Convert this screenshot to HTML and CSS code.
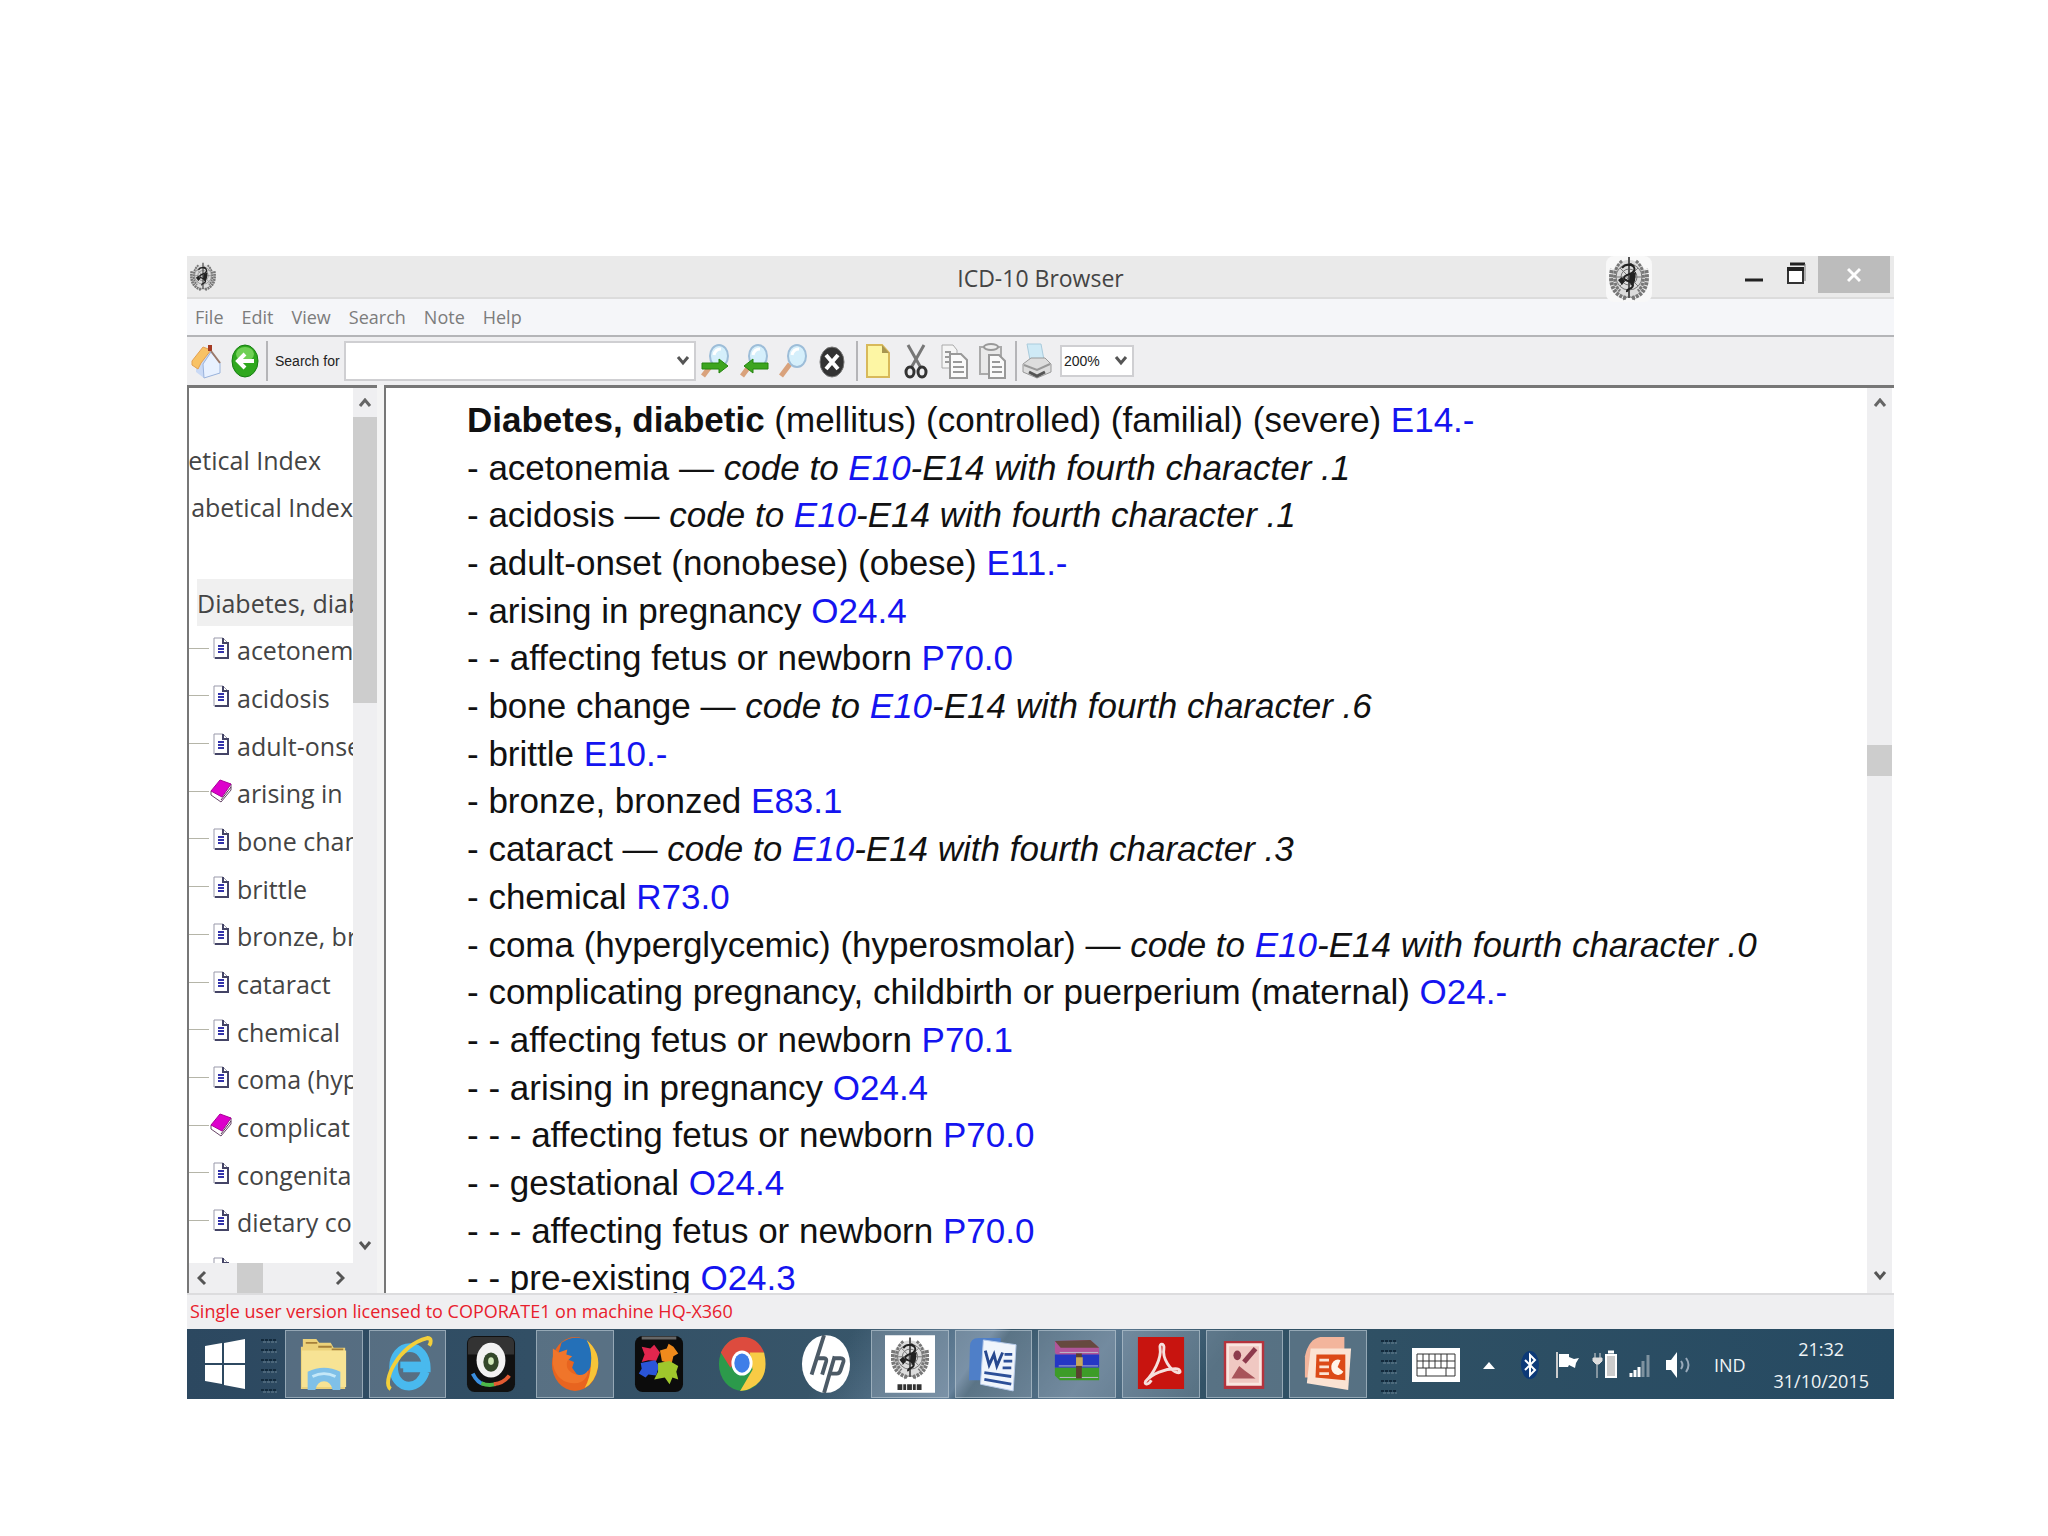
FILE: index.html
```html
<!DOCTYPE html>
<html lang="en">
<head>
    <meta charset="UTF-8">
    <meta name="viewport" content="width=device-width, initial-scale=1.0">
    <title>ICD-10 Browser</title>
    <link rel="stylesheet" href="styles.css">
</head>
<body>
    <!-- shared icons -->
    <svg class="defs" aria-hidden="true">
        <symbol id="emblem" viewBox="0 0 40 46">
            <ellipse cx="20" cy="23" rx="18" ry="19" fill="#dcdcdc"/>
            <g fill="none" stroke="#777">
                <path d="M17 42C4 39 0 27 3 13M23 42c13-3 17-15 14-29" stroke-width="4" stroke-dasharray="3 1"/>
                <path d="M13 5C4 12 3 28 11 35M27 5c9 7 10 23 2 30" stroke-width="3" stroke-dasharray="3 1"/>
                <circle cx="20" cy="21" r="13"/>
                <circle cx="20" cy="21" r="8"/>
                <path d="M7 21h26M11 12l18 18M29 12L11 30M14 44l6-4 6 4"/>
            </g>
            <path d="M20 1v41" stroke="#555" stroke-width="2"/>
            <path d="M13 12c4-6 15-3 12 3-2 4-10 3-10 7s9 2 9 7-7 3-6 7" fill="none" stroke="#222" stroke-width="2"/>
            <path d="M9 24l4-3 3 4-3 4zM21 18l6-2-1 9-3 5-3-4zM17 9l5-2 4 3z" fill="#222"/>
        </symbol>
        <symbol id="doc" viewBox="0 0 16 22">
            <path d="M1 1h9l5 5v15H1z" fill="#fff" stroke="#99a"/>
            <path d="M10 1v5h5v15H2" fill="none" stroke="#446" stroke-width="2"/>
            <path d="M5 9h6M5 12h6M5 15h6" stroke="#33a" stroke-width="2"/>
        </symbol>
        <symbol id="book" viewBox="0 0 22 24">
            <path d="M1 12v4l10 7 10-12V5z" fill="#fff" stroke="#646"/>
            <path d="M1 12L10 1l11 4-9 13z" fill="#d0c" stroke="#a09"/>
            <path d="M11 21L21 8" stroke="#535"/>
        </symbol>
        <symbol id="down" viewBox="0 0 14 10"><path d="M2 1l5 6 5-6" fill="none" stroke="#555" stroke-width="3"/></symbol>
        <symbol id="up" viewBox="0 0 14 10"><path d="M2 8l5-6 5 6" fill="none" stroke="#666" stroke-width="3"/></symbol>
        <symbol id="lens" viewBox="0 0 30 36">
            <path d="M3 33l9-12" stroke="#d9a27c" stroke-width="5"/>
            <ellipse cx="19" cy="13" rx="9" ry="11" fill="#d5effb" stroke="#9dbdd8" stroke-width="2"/>
            <path d="M14 12c1-5 4-6 7-6" fill="none" stroke="#fff" stroke-width="3"/>
        </symbol>
        <symbol id="grip" viewBox="0 0 18 60">
            <path d="M1 6h16M1 16h16M1 26h16M1 36h16M1 46h16M1 56h16" stroke="#132a3c" stroke-width="2" stroke-dasharray="3 1"/>
            <path d="M3 8h14M3 18h14M3 28h14M3 38h14M3 48h14M3 58h14" stroke="#6d8494" stroke-dasharray="3 1"/>
        </symbol>
    </svg>

    <div class="window">
        <header class="titlebar">
            <svg class="app-icon"><use href="#emblem"/></svg>
            <h1>ICD-10 Browser</h1>
            <span class="badge"><svg><use href="#emblem"/></svg></span>
            <div class="controls">
                <button aria-label="Minimize"><svg viewBox="0 0 20 30"><path d="M1 20h18" stroke="#222" stroke-width="3"/></svg></button>
                <button aria-label="Restore"><svg viewBox="0 0 20 30"><path d="M4 4h15" stroke="#222" stroke-width="3"/><path d="M19 4v17" stroke="#777"/><path d="M2 10v13h15V10" fill="#fff" stroke="#333" stroke-width="2"/><path d="M1 9h17" stroke="#222" stroke-width="4"/></svg></button>
                <button class="close" aria-label="Close"><svg viewBox="0 0 14 16"><path d="M1 2l12 12M13 2L1 14" stroke="#fff" stroke-width="3"/></svg></button>
            </div>
        </header>

        <nav class="menubar">
            <button>File</button>
            <button>Edit</button>
            <button>View</button>
            <button>Search</button>
            <button>Note</button>
            <button>Help</button>
        </nav>

        <div class="toolbar">
            <button aria-label="Home"><svg viewBox="0 0 30 36"><path d="M5 19L19 7l9 12v11l-15 5-8-6z" fill="#c9d9f5"/><path d="M12 21l8-12 9 11v10l-16 5z" fill="#e8f1ff" stroke="#9ab3dc"/><path d="M1 18L12 4l8 3-10 13-3 6-6-4z" fill="#f8c265" stroke="#e3a050"/><path d="M19 2v6" stroke="#a53a22" stroke-width="4"/><path d="M20 8l9 12" stroke="#9b7a6b" stroke-width="2"/></svg></button>
            <button class="back" aria-label="Back"><svg viewBox="0 0 30 36"><ellipse cx="15" cy="18" rx="13" ry="16" fill="#2fa81e" stroke="#167d12"/><ellipse cx="15" cy="11" rx="9" ry="7" fill="#6fd055"/><path d="M24 18H9M15 11l-7 7 7 7" fill="none" stroke="#fff" stroke-width="4"/></svg></button>
            <span class="sep"></span>
            <label for="search">Search for</label>
            <span class="combo combo-search">
                <select id="search"><option></option></select>
                <svg><use href="#down"/></svg>
            </span>
            <button aria-label="Find next"><svg viewBox="0 0 30 36"><use href="#lens"/><path d="M2 20h17v-4l9 7-9 7v-4H2z" fill="#3da51f" stroke="#24850f"/></svg></button>
            <button aria-label="Find previous"><svg viewBox="0 0 30 36"><use href="#lens"/><path d="M29 20H14v-4l-9 7 9 7v-4h15z" fill="#3da51f" stroke="#24850f"/></svg></button>
            <button aria-label="Find"><svg viewBox="0 0 30 36"><use href="#lens"/></svg></button>
            <button aria-label="Stop"><svg viewBox="0 0 30 36"><ellipse cx="15" cy="19" rx="12" ry="15" fill="#333" stroke="#777"/><path d="M9 12l12 14M21 12L9 26" stroke="#fff" stroke-width="4"/></svg></button>
            <span class="sep"></span>
            <button aria-label="New note"><svg viewBox="0 0 30 36"><path d="M4 2h15l7 8v24H4z" fill="#fdf6a4" stroke="#d8b95a" stroke-width="2"/><path d="M19 2v8h7z" fill="#a89650"/></svg></button>
            <button aria-label="Cut"><svg viewBox="0 0 30 36"><path d="M7 2l13 23M23 2L10 25" stroke="#777" stroke-width="3"/><ellipse cx="9" cy="29" rx="4" ry="5" fill="none" stroke="#333" stroke-width="3"/><ellipse cx="21" cy="29" rx="4" ry="5" fill="none" stroke="#333" stroke-width="3"/></svg></button>
            <button aria-label="Copy"><svg viewBox="0 0 30 36"><path d="M3 2h11l4 5v18H3z" fill="#f5f5f5" stroke="#aaa"/><path d="M6 9h6M6 14h6M6 19h6" stroke="#999" stroke-width="2"/><path d="M11 11h11l6 6v18H11z" fill="#fafafa" stroke="#999" stroke-width="2"/><path d="M14 19h9M14 24h11M14 29h11" stroke="#999" stroke-width="2"/></svg></button>
            <button aria-label="Paste"><svg viewBox="0 0 30 36"><path d="M3 4h21v27H3z" fill="#e9e9e9" stroke="#aaa" stroke-width="2"/><ellipse cx="14" cy="4" rx="7" ry="3" fill="#eee" stroke="#999" stroke-width="2"/><path d="M12 12h10l6 6v17H12z" fill="#fafafa" stroke="#999" stroke-width="2"/><path d="M15 19h8M15 24h10M15 29h10" stroke="#999" stroke-width="2"/></svg></button>
            <span class="sep"></span>
            <button aria-label="Print"><svg viewBox="0 0 30 36"><path d="M5 1h14l3 16H8z" fill="#cfeaf6" stroke="#aacbdc"/><path d="M1 21l8-6h14l6 6v8l-14 6-14-6z" fill="#ddd" stroke="#999"/><path d="M2 22l13 5 13-6" fill="none" stroke="#999" stroke-width="2"/><path d="M7 29l8 4 8-4" stroke="#555" stroke-width="3" fill="none"/></svg></button>
            <span class="combo combo-zoom">
                <select aria-label="Zoom"><option>200%</option></select>
                <svg><use href="#down"/></svg>
            </span>
        </div>

        <main class="panes">
            <aside class="sidebar">
                <ul class="tree">
                    <li></li>
                    <li class="top"><span>etical Index</span></li>
                    <li class="top"><span>abetical Index</span></li>
                    <li></li>
                    <li class="selected"><span>Diabetes, diabetic</span></li>
                    <li class="leaf"><svg><use href="#doc"/></svg><span>acetonemia</span></li>
                    <li class="leaf"><svg><use href="#doc"/></svg><span>acidosis</span></li>
                    <li class="leaf"><svg><use href="#doc"/></svg><span>adult-onset</span></li>
                    <li class="leaf"><svg class="book"><use href="#book"/></svg><span>arising in</span></li>
                    <li class="leaf"><svg><use href="#doc"/></svg><span>bone change</span></li>
                    <li class="leaf"><svg><use href="#doc"/></svg><span>brittle</span></li>
                    <li class="leaf"><svg><use href="#doc"/></svg><span>bronze, bronzed</span></li>
                    <li class="leaf"><svg><use href="#doc"/></svg><span>cataract</span></li>
                    <li class="leaf"><svg><use href="#doc"/></svg><span>chemical</span></li>
                    <li class="leaf"><svg><use href="#doc"/></svg><span>coma (hyperglycemic)</span></li>
                    <li class="leaf"><svg class="book"><use href="#book"/></svg><span>complicat</span></li>
                    <li class="leaf"><svg><use href="#doc"/></svg><span>congenita</span></li>
                    <li class="leaf"><svg><use href="#doc"/></svg><span>dietary co</span></li>
                    <li class="leaf last"><svg><use href="#doc"/></svg></li>
                </ul>
                <div class="vscroll">
                    <svg><use href="#up"/></svg>
                    <div class="thumb"></div>
                    <svg class="end"><use href="#down"/></svg>
                </div>
                <div class="hscroll">
                    <svg viewBox="0 0 10 16"><path d="M8 2L2 8l6 6" fill="none" stroke="#555" stroke-width="3"/></svg>
                    <div class="thumb"></div>
                    <svg viewBox="0 0 10 16"><path d="M2 2l6 6-6 6" fill="none" stroke="#555" stroke-width="3"/></svg>
                </div>
            </aside>

            <section class="content">
                <div class="entries">
                    <p><b>Diabetes, diabetic</b> (mellitus) (controlled) (familial) (severe) <a href="#">E14.-</a></p>
                    <p>- acetonemia — <i>code to <a href="#">E10</a>-E14 with fourth character .1</i></p>
                    <p>- acidosis — <i>code to <a href="#">E10</a>-E14 with fourth character .1</i></p>
                    <p>- adult-onset (nonobese) (obese) <a href="#">E11.-</a></p>
                    <p>- arising in pregnancy <a href="#">O24.4</a></p>
                    <p>- - affecting fetus or newborn <a href="#">P70.0</a></p>
                    <p>- bone change — <i>code to <a href="#">E10</a>-E14 with fourth character .6</i></p>
                    <p>- brittle <a href="#">E10.-</a></p>
                    <p>- bronze, bronzed <a href="#">E83.1</a></p>
                    <p>- cataract — <i>code to <a href="#">E10</a>-E14 with fourth character .3</i></p>
                    <p>- chemical <a href="#">R73.0</a></p>
                    <p>- coma (hyperglycemic) (hyperosmolar) — <i>code to <a href="#">E10</a>-E14 with fourth character .0</i></p>
                    <p>- complicating pregnancy, childbirth or puerperium (maternal) <a href="#">O24.-</a></p>
                    <p>- - affecting fetus or newborn <a href="#">P70.1</a></p>
                    <p>- - arising in pregnancy <a href="#">O24.4</a></p>
                    <p>- - - affecting fetus or newborn <a href="#">P70.0</a></p>
                    <p>- - gestational <a href="#">O24.4</a></p>
                    <p>- - - affecting fetus or newborn <a href="#">P70.0</a></p>
                    <p>- - pre-existing <a href="#">O24.3</a></p>
                </div>
                <div class="vscroll">
                    <svg><use href="#up"/></svg>
                    <div class="thumb"></div>
                    <svg class="end"><use href="#down"/></svg>
                </div>
            </section>
        </main>

        <div class="status">Single user version licensed to COPORATE1 on machine HQ-X360</div>

        <footer class="taskbar">
            <div class="start">
                <button aria-label="Start"><svg viewBox="0 0 42 50"><path d="M1 7l17-3v20H1zM20 4l21-4v24H20zM1 26h17v19L1 42zM20 26h21v24l-21-4z" fill="#fff"/></svg></button>
                <svg class="grip"><use href="#grip"/></svg>
            </div>
            <div class="apps">
                <button class="open" aria-label="File Explorer"><svg viewBox="0 0 52 60"><path d="M4 4h14l3 4h12l3 5h12v43H2V12h2z" fill="#ecd27a"/><path d="M7 8h12M20 12h14M34 15h12" stroke="#a4803a" stroke-width="2"/><path d="M3 16h46v38H3z" fill="#f7e394"/><path d="M9 38q17-8 34 0v19h-8q-2-9-9-9t-9 9H9z" fill="#7fc0e8"/><path d="M14 43q12-6 24 0" stroke="#c5e8f8" stroke-width="3" fill="none"/></svg></button>
                <button class="open" aria-label="Internet Explorer"><svg viewBox="0 0 52 60"><path d="M44 38c-3 9-9 15-17 15-10 0-16-9-16-20s7-20 17-20 17 9 17 21H21" fill="none" stroke="#49b9ee" stroke-width="9"/><path d="M18 31h26" stroke="#49b9ee" stroke-width="7"/><path d="M8 56C-2 50 16 10 46 3c5 0 4 5 2 8" fill="none" stroke="#f3cf3a" stroke-width="4"/></svg></button>
                <button aria-label="Camera"><svg viewBox="0 0 52 60"><rect x="1" y="1" width="50" height="58" rx="8" fill="#111"/><path d="M2 20V9q0-7 7-7h34q7 0 7 7v11z" fill="#333"/><ellipse cx="26" cy="26" rx="15" ry="18" fill="#f2f2f2"/><ellipse cx="26" cy="28" rx="8" ry="10" fill="#33472a"/><ellipse cx="26" cy="27" rx="3" ry="4" fill="#cfe7b8"/><path d="M7 40q5 10 12 11" fill="none" stroke="#3a8fe0" stroke-width="4"/><path d="M16 50q7 3 15 1" fill="none" stroke="#4cb749" stroke-width="4"/><path d="M29 51q10-1 16-9" fill="none" stroke="#e35b32" stroke-width="4"/></svg></button>
                <button class="open" aria-label="Firefox"><svg viewBox="0 0 52 60"><ellipse cx="26" cy="30" rx="24" ry="28" fill="#e8641f"/><path d="M38 5q14 12 12 28-3 16-14 22 12-22 2-50z" fill="#f7c438"/><path d="M12 8q12-9 26-3 7 12 4 28-5 12-14 8l-5-7 2-6-7-3-5 3-5-6z" fill="#2470b8"/><path d="M3 14l6 4 9-3-1 5 6 2-5 5q-3 10 9 14 9 2 13-5-2 14-14 14Q7 50 3 30z" fill="#f0752a"/></svg></button>
                <button aria-label="Puzzle"><svg viewBox="0 0 52 60"><rect x="1" y="1" width="50" height="58" rx="8" fill="#0c0c0c"/><path d="M8 3h36" stroke="#666" stroke-width="3"/><path d="M8 12l9 2 4-4 6 8-4 9-8-1-7 2 3-8z" fill="#e0264e"/><path d="M27 16l7-2 2-5 5 3 5 7-5 3-2 8-10-3z" fill="#ef8a1c"/><path d="M7 29l15-3 4 6-3 10-8-1-3 3-7-4 3-5z" fill="#2a55d8"/><path d="M25 29l12-2 9 5-2 6 2 8-6-2-3 7-5-7-11 2 4-8z" fill="#9fc72c"/></svg></button>
                <button aria-label="Chrome"><svg viewBox="0 0 52 60"><ellipse cx="26" cy="30" rx="24" ry="28" fill="#2c9a4b"/><path d="M4 18Q12 2 27 2t22 16L26 20 14 34z" fill="#dd4b3e"/><path d="M49 18q6 26-12 36-6 4-13 4l13-22-3-18z" fill="#f8cb45"/><ellipse cx="26" cy="29" rx="11" ry="13" fill="#fff"/><ellipse cx="26" cy="29" rx="8" ry="10" fill="#3f7ee8"/></svg></button>
                <button aria-label="HP"><svg viewBox="0 0 52 60"><ellipse cx="26" cy="30" rx="25" ry="30" fill="#fff"/><path d="M24 0L11 41M16 24h8q3 0 2 4l-4 13M35 22L24 60M34 24h7q4 0 3 4l-3 9q-1 3-4 3h-6" fill="none" stroke="#4c5a66" stroke-width="4"/></svg></button>
                <button class="open" aria-label="ICD-10"><svg viewBox="0 0 52 60"><path d="M0 0h52v60H0z" fill="#fff"/><use href="#emblem" x="6" y="1" width="40" height="47"/><path d="M13 54h26" stroke="#333" stroke-width="6" stroke-dasharray="5 1 3 1"/></svg></button>
                <button class="open" aria-label="Word"><svg viewBox="0 0 52 60"><path d="M2 12q0-9 9-9h23v44H1z" fill="#4f7fc8"/><path d="M16 5l34 5-3 48-34-7z" fill="#f0f5fc" stroke="#b7cbea"/><path d="M18 16l4 15 5-11 3 12 6-14" fill="none" stroke="#27488f" stroke-width="3"/><path d="M38 20h8M37 27h9M36 34h9M17 39l28 4M17 46l28 5" stroke="#2c4f98" stroke-width="3"/></svg></button>
                <button class="open" aria-label="WinRAR"><svg viewBox="0 0 52 60"><path d="M3 6l37-1 9 8v10H7l-4-5z" fill="#b0559a"/><path d="M3 6l37-1 9 8H9z" fill="#66493f"/><path d="M3 20h46v14H3z" fill="#2537c4"/><path d="M3 34h46v13H8l-5-5z" fill="#3d9c28"/><path d="M8 18h40M7 32h41M8 44h40" stroke="#b9b9c9" stroke-width="1"/><path d="M28 19v26" stroke="#5a4030" stroke-width="6"/><path d="M25 23h7v9h-7z" fill="#c8a95c"/></svg></button>
                <button class="open" aria-label="Adobe Reader"><svg viewBox="0 0 52 60"><path d="M2 2h48v54H2z" fill="#c8140f"/><path d="M10 48C18 40 27 24 25 13c-1-5 5-5 4 1-2 10 7 23 14 25 5 1 3-4-2-4-11 0-24 5-31 13-2 4 3 4 6-1" fill="none" stroke="#f6e0dc" stroke-width="3"/></svg></button>
                <button class="open" aria-label="K"><svg viewBox="0 0 52 60"><path d="M5 6h42v50H5z" fill="#b5333d"/><path d="M9 10h34v41H9z" fill="#f0c8c2" stroke="#fae6e0" stroke-width="3"/><ellipse cx="19" cy="21" rx="4" ry="5" fill="#8d3a4c"/><path d="M38 14L26 28" stroke="#8d3a4c" stroke-width="5"/><path d="M13 45l8-13 6 5 11 8z" fill="#a8545a"/></svg></button>
                <button class="open" aria-label="PowerPoint"><svg viewBox="0 0 52 60"><path d="M2 22Q6 4 18 2h25v42H2z" fill="#f3b59c"/><path d="M8 14h42l-3 43L4 50z" fill="#fbe3d3"/><path d="M14 20h30v27l-31-3z" fill="#dc4a17"/><path d="M17 26h10M17 33h10M17 40h10" stroke="#fbe3d3" stroke-width="3"/><path d="M39 26a7 8 0 1 0 3 12l-6-5z" fill="#fff3e8"/></svg></button>
            </div>
            <div class="tray">
                <svg class="grip"><use href="#grip"/></svg>
                <svg class="keyboard" viewBox="0 0 48 34"><path d="M0 0h48v34H0z" fill="#fff"/><path d="M5 6h38v22H5zM5 13h38M5 20h38M11 6v14M17 6v14M23 6v14M29 6v14M35 6v14M14 20v8M34 20v8" fill="none" stroke="#333"/></svg>
                <svg class="more" viewBox="0 0 14 10"><path d="M1 9l6-7 6 7z" fill="#fff"/></svg>
                <svg class="bluetooth" viewBox="0 0 18 30"><ellipse cx="9" cy="15" rx="9" ry="14" fill="#0d3a78"/><path d="M4 10l10 10-5 5V5l5 5L4 20" fill="none" stroke="#fff" stroke-width="2"/></svg>
                <svg class="flag" viewBox="0 0 26 30"><path d="M2 2v26" stroke="#ccc" stroke-width="2"/><path d="M4 4h10v3l5 2 5-1-3 5-1 5-6-3-1 2H4z" fill="#fff"/></svg>
                <svg class="battery" viewBox="0 0 26 30"><path d="M3 3v5M8 3v5M1 8h9v3l-3 3H4l-3-3zM5 14v14" stroke="#ddd" stroke-width="1" fill="#ddd"/><path d="M14 5h10v22H14z" fill="#ccc" stroke="#fff" stroke-width="2"/><path d="M16 2h6" stroke="#fff" stroke-width="3"/></svg>
                <svg class="signal" viewBox="0 0 22 24"><path d="M2 24v-4M6 24v-7M10 24V14" stroke="#fff" stroke-width="3"/><path d="M14 24V8M19 24V2" stroke="#7e929f" stroke-width="3"/></svg>
                <svg class="sound" viewBox="0 0 28 30"><path d="M1 10h5l6-8v26l-6-8H1z" fill="#fff"/><path d="M16 11q3 4 0 8M21 8q5 7 0 14" fill="none" stroke="#9ab" stroke-width="2"/></svg>
                <span class="lang">IND</span>
                <div class="clock">
                    <time>21:32</time>
                    <time>31/10/2015</time>
                </div>
            </div>
        </footer>
    </div>
</body>
</html>
```
FILE: styles.css
```css
* {
    box-sizing: border-box;
}
body {
    margin: 0;
    padding: 256px 154px 137px 187px;
    height: 100vh;
    background-color: #fff;
    font-family: "Open Sans", "Noto Sans", sans-serif;
    color: #333;
}
button {
    padding: 0;
    border: none;
    background: none;
    font: inherit;
    color: inherit;
}
svg {
    display: block;
    flex: none;
}
.defs {
    position: absolute;
    width: 0;
    height: 0;
}
.window {
    display: flex;
    flex-direction: column;
    height: 100%;
}

/* title bar */
.titlebar {
    position: relative;
    display: flex;
    align-items: center;
    justify-content: center;
    height: 43px;
    background-color: #eaeaea;
    border-bottom: 2px solid #dcdcdc;
}
.titlebar h1 {
    margin: 0;
    padding-top: 2px;
    font-size: 23px;
    font-weight: normal;
    line-height: 40px;
    color: #444;
}
.app-icon {
    position: absolute;
    left: 3px;
    top: 6px;
    width: 26px;
    height: 30px;
}
.badge {
    position: absolute;
    right: 242px;
    top: 0;
    padding: 0 2px;
    border-radius: 8px;
    background-color: #f8f8f8;
}
.badge svg {
    width: 42px;
    height: 46px;
}
.controls {
    position: absolute;
    top: 0;
    right: 4px;
    display: flex;
    gap: 22px;
}
.controls button {
    width: 20px;
    height: 37px;
}
.controls svg {
    width: 20px;
    height: 30px;
    margin: 0 auto;
}
.controls .close {
    width: 72px;
    margin-left: -10px;
    background-color: #bcbcbc;
}
.controls .close svg {
    width: 14px;
    height: 16px;
}

/* menu */
.menubar {
    display: flex;
    gap: 18px;
    height: 38px;
    padding: 0 8px;
    background-color: #f5f6f9;
    border-bottom: 2px solid #b4b5b8;
    font-size: 18px;
    color: #7c7c7c;
}

/* toolbar */
.toolbar {
    display: flex;
    align-items: center;
    height: 48px;
    padding-left: 4px;
    background-color: #efeff1;
}
.toolbar button {
    width: 30px;
    height: 36px;
    margin-right: 9px;
}
.toolbar button svg {
    width: 30px;
    height: 36px;
}
.toolbar .back {
    margin-right: 6px;
}
.sep {
    width: 2px;
    height: 40px;
    margin-right: 7px;
    background-color: #b5b5b8;
}
.combo-search ~ .sep {
    margin-right: 5px;
}
.combo-search ~ .sep ~ button {
    margin-right: 8px;
}
.toolbar label {
    width: 69px;
    font-family: "Liberation Sans", Arial, sans-serif;
    font-size: 14px;
    color: #222;
    white-space: nowrap;
}
.combo {
    position: relative;
}
.combo select {
    width: 100%;
    height: 100%;
    padding: 0 2px;
    border: 2px solid #cfcfd2;
    border-radius: 0;
    background-color: #fff;
    appearance: none;
    font-family: "Liberation Sans", Arial, sans-serif;
    font-size: 14px;
    color: #222;
}
.combo svg {
    position: absolute;
    top: 50%;
    right: 6px;
    width: 14px;
    height: 10px;
    margin-top: -5px;
}
.combo-search {
    width: 352px;
    height: 40px;
    margin-right: 4px;
}
.combo-zoom {
    width: 74px;
    height: 32px;
}

/* panes */
.panes {
    flex: 1;
    display: flex;
    gap: 7px;
    min-height: 0;
    background-color: #f4f4f4;
}
.sidebar {
    display: grid;
    grid-template-columns: 1fr 24px;
    grid-template-rows: minmax(0, 1fr) 30px;
    width: 190px;
    border-top: 3px solid #777;
    border-left: 2px solid #777;
    background-color: #efeff1;
    overflow: hidden;
}
.tree {
    display: grid;
    grid-template-rows: repeat(19, 1fr);
    min-width: 0;
    height: calc(100% + 31px);
    margin: 0;
    padding: 0;
    background-color: #fff;
    list-style: none;
    font-size: 25px;
    color: #444;
    white-space: nowrap;
}
.tree li {
    display: flex;
    align-items: center;
    min-height: 0;
    min-width: 0;
    overflow: hidden;
}
.tree .top {
    justify-content: flex-end;
}
.tree .top:nth-child(2) {
    padding-right: 32px;
}
.tree .selected {
    margin-left: 8px;
    background-color: #f0f0f0;
}
.leaf::before {
    content: "";
    flex: none;
    width: 20px;
    margin-bottom: 4px;
    border-top: 1px solid #b5b5a8;
}
.tree .last::before {
    border-color: transparent;
}
.leaf svg {
    width: 16px;
    height: 22px;
    margin: 0 8px 4px 4px;
}
.leaf .book {
    width: 22px;
    height: 24px;
    margin: 0 5px 4px 1px;
}
.vscroll {
    display: flex;
    flex-direction: column;
    align-items: center;
    padding: 10px 0 12px;
    background-color: #efeff1;
}
.vscroll svg {
    width: 14px;
    height: 10px;
}
.vscroll .thumb {
    width: 100%;
    height: 286px;
    margin-top: 9px;
    background-color: #cdcdcd;
}
.vscroll .end {
    margin-top: auto;
}
.hscroll {
    grid-column: 1 / 2;
    z-index: 1;
    display: flex;
    align-items: center;
    padding: 0 8px;
    background-color: #efeff1;
}
.hscroll svg {
    width: 10px;
    height: 16px;
}
.hscroll .thumb {
    width: 26px;
    height: 100%;
    margin: 0 auto 0 30px;
    background-color: #cdcdcd;
}

/* index entries */
.content {
    flex: 1;
    display: flex;
    min-width: 0;
    padding-right: 2px;
    border-top: 3px solid #777;
    border-left: 2px solid #777;
    background-color: #fff;
    overflow: hidden;
}
.entries {
    flex: 1;
    display: grid;
    grid-template-rows: repeat(19, 1fr);
    min-width: 0;
    height: calc(100% + 9px);
    padding: 8px 0 0 81px;
    font-family: "Liberation Sans", Arial, sans-serif;
    font-size: 35px;
    line-height: 48px;
    color: #111;
    white-space: nowrap;
}
.entries p {
    margin: 0;
    min-height: 0;
}
.entries a {
    color: #1414f0;
    text-decoration: none;
}
.content .vscroll {
    width: 25px;
}
.content .vscroll .thumb {
    height: 31px;
    margin-top: 337px;
}

.status {
    height: 36px;
    padding-left: 3px;
    background-color: #efeff1;
    border-top: 2px solid #dcdcde;
    font-size: 18px;
    line-height: 32px;
    color: #e8202c;
}

/* task bar */
.taskbar {
    display: flex;
    height: 70px;
    background:
        linear-gradient(125deg, transparent 38%, rgba(150, 175, 205, 0.5) 46%, transparent 47%, rgba(150, 175, 205, 0.4) 53%, transparent 60%),
        linear-gradient(90deg, #2c4860, #38566a 40%, #2f5064 70%, #264a62);
    color: #f0f4f6;
}
.start {
    display: flex;
    align-items: center;
    justify-content: space-between;
    width: 95px;
    padding: 0 4px 0 17px;
}
.start button svg {
    width: 42px;
    height: 50px;
}
.grip {
    width: 18px;
    height: 60px;
}
.apps {
    flex: 1;
    display: grid;
    grid-template-columns: repeat(13, 1fr);
}
.apps button {
    display: flex;
    align-items: center;
    justify-content: center;
    margin: 1px 3px;
}
.apps .open {
    border: 1px solid rgba(190, 205, 215, 0.6);
    background-color: rgba(160, 175, 190, 0.35);
}
.apps svg {
    width: 50px;
    height: 58px;
}
.tray {
    display: flex;
    align-items: center;
    width: 524px;
    padding: 2px 25px 0 10px;
    font-size: 18px;
    line-height: 32px;
}
.keyboard {
    width: 48px;
    height: 34px;
    margin: 0 22px 0 14px;
}
.more {
    width: 14px;
    height: 10px;
    margin-right: 25px;
}
.bluetooth {
    width: 18px;
    height: 30px;
    margin-right: 16px;
}
.flag, .battery {
    width: 26px;
    height: 30px;
    margin-right: 11px;
}
.signal {
    width: 22px;
    height: 24px;
    margin-right: 14px;
}
.sound {
    width: 28px;
    height: 30px;
}
.lang {
    margin-left: 21px;
}
.clock {
    margin-left: auto;
    text-align: center;
}
.clock time {
    display: block;
}
```
